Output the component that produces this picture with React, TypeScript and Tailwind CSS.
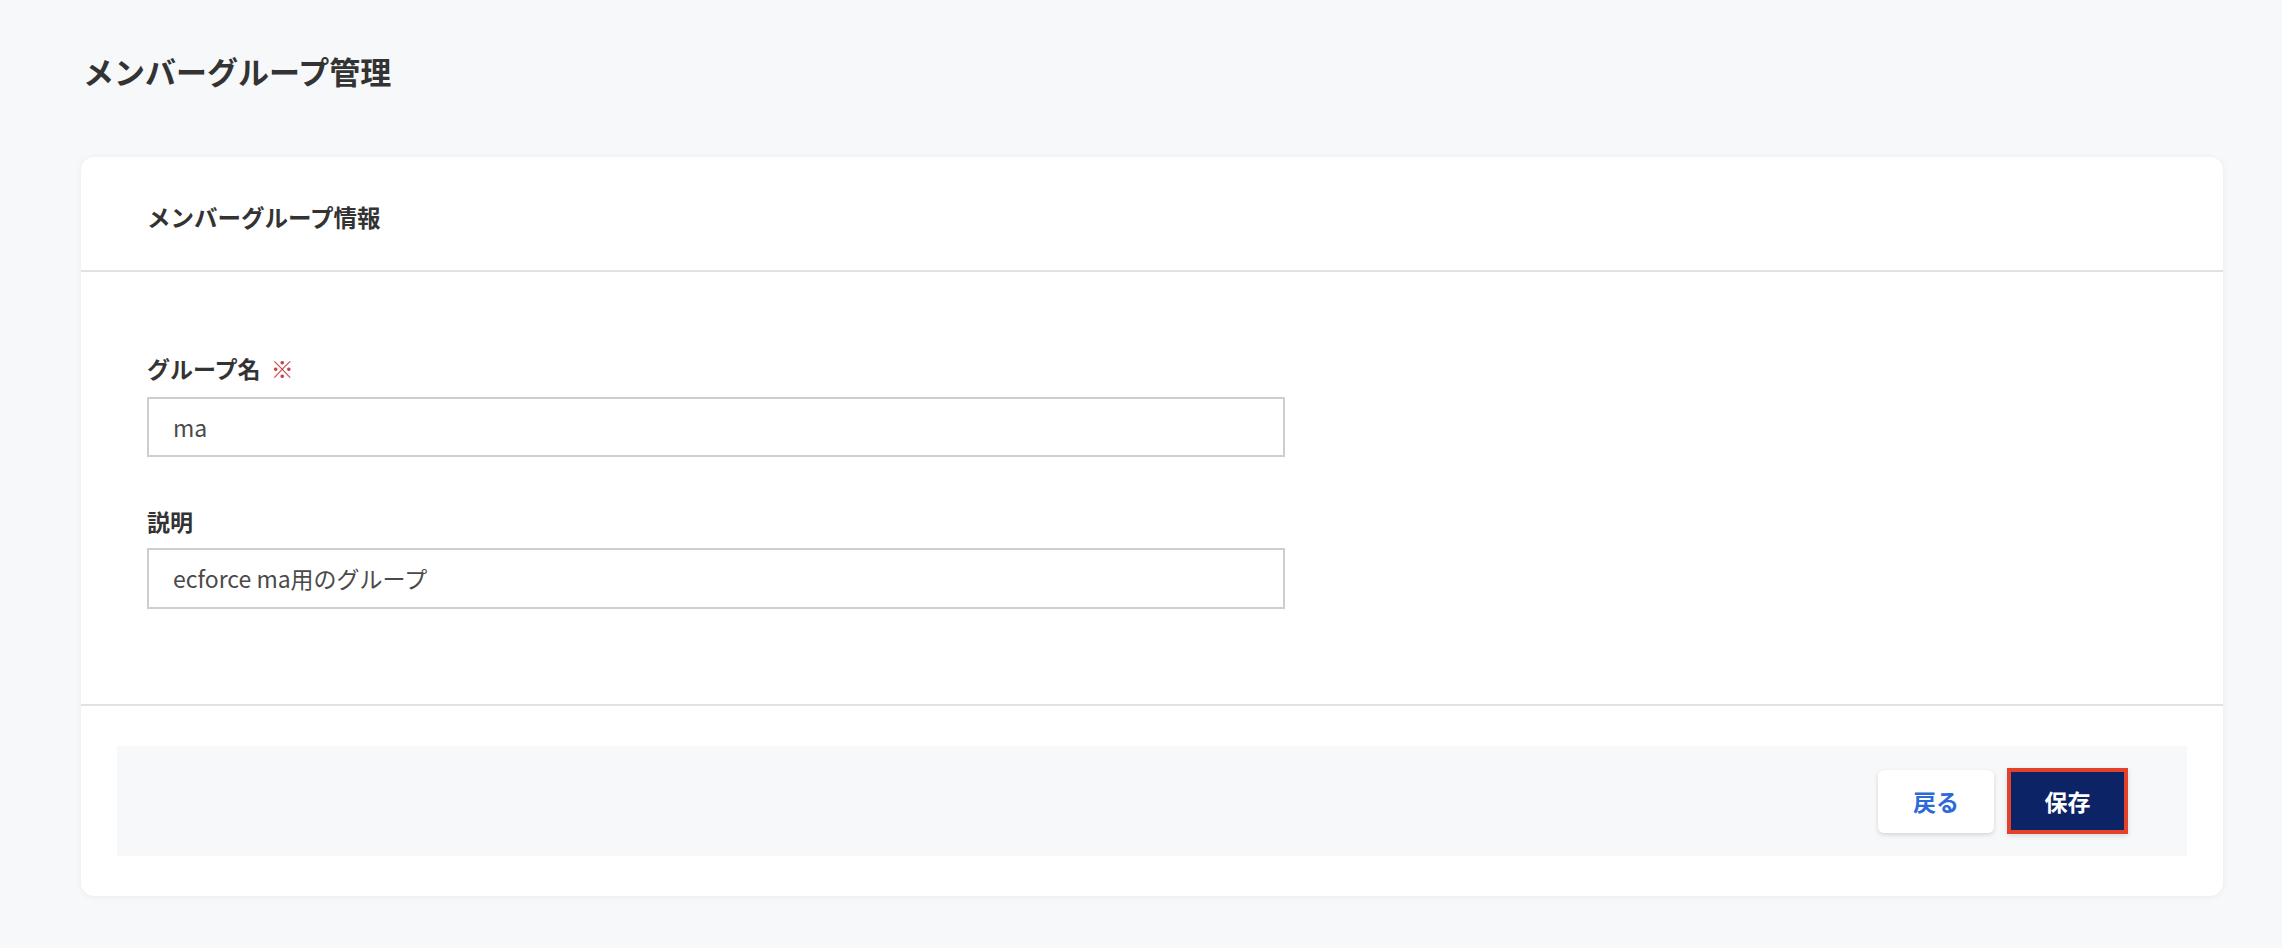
import React from "react";

const font = { fontFamily: '"Noto Sans CJK JP", "Noto Sans", sans-serif' };

export default function App() {
  return (
    <div
      className="min-h-screen bg-[#f7f8fa] pl-[81px] pr-[59px] pt-[49px] pb-[51px] text-[#333333]"
      style={font}
    >
      <h1 className="text-[31px] leading-[43px] font-bold text-[#333333] pl-[2px]">
        メンバーグループ管理
      </h1>

      <div className="mt-[65px] bg-white rounded-[13px] shadow-[0_1px_6px_rgba(0,0,0,0.06)]">
        <div className="pl-[66px] pt-[44px] pb-[37px] border-b-2 border-[#e2e2e4]">
          <h2 className="text-[23.5px] leading-[32px] font-bold text-[#333333]">
            メンバーグループ情報
          </h2>
        </div>

        <div className="pl-[66px] pt-[80px] pb-[95px] border-b-2 border-[#e2e2e4]">
          <div className="flex items-center text-[23px] leading-[32px] font-bold">
            <span>グループ名</span>
            <span className="ml-[10px] font-normal text-[#c2434b]">※</span>
          </div>
          <div className="mt-[13px] w-[1138px] h-[60px] border-2 border-[#cdcdd2] flex items-center pl-[24px] text-[23px] text-[#4a4a4a]">
            ma
          </div>

          <div className="mt-[48px] text-[23px] leading-[32px] font-bold">説明</div>
          <div className="mt-[11px] w-[1138px] h-[61px] border-2 border-[#cdcdd2] flex items-center pl-[24px] text-[23px] text-[#4a4a4a]">
            ecforce ma用のグループ
          </div>
        </div>

        <div className="px-[36px] py-[40px]">
          <div className="h-[110px] bg-[#f7f8fa] flex items-center justify-end pr-[59px] gap-[13px]">
            <button className="w-[116px] h-[63px] bg-white rounded-[6px] shadow-[0_2px_5px_rgba(0,0,0,0.14)] text-[23px] font-bold text-[#2b6ad9]">
              戻る
            </button>
            <button className="w-[121px] h-[66px] bg-[#0c2466] border-[4px] border-[#e3412c] text-[23px] font-bold text-white shadow-[0_2px_5px_rgba(0,0,0,0.12)]">
              保存
            </button>
          </div>
        </div>
      </div>
    </div>
  );
}
